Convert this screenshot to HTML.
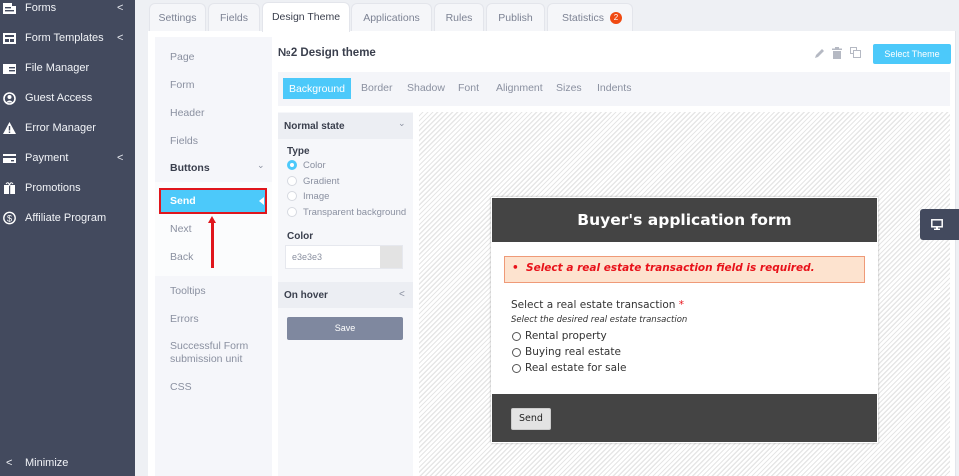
<!DOCTYPE html>
<html><head><meta charset="utf-8">
<style>
*{box-sizing:border-box;margin:0;padding:0}
body{width:959px;height:476px;overflow:hidden;background:#eef0f4;font-family:"Liberation Sans",sans-serif;position:relative;font-size:11px;color:#8a90a0}
.abs{position:absolute}
#side{left:0;top:0;width:135px;height:476px;background:#434a5e}
.si{position:absolute;left:25px;color:#f2f4f8;font-size:11px}
.ic{position:absolute;left:3px;width:13px;height:11px}
.chev{position:absolute;left:117px;color:#e8eaf0;font-size:11px}
.tab{position:absolute;top:3px;height:29px;background:#f5f6f9;border:1px solid #e3e5eb;border-bottom:none;border-radius:6px 6px 0 0;text-align:center;line-height:28px;color:#7d8394;font-size:10.5px}
.tab.act{background:#fff;color:#3a3f4d;top:2px;height:30px}
#panel{left:148px;top:31px;width:808px;height:445px;background:#fff;border-right:1px solid #e3e5eb}
#lm{left:155px;top:37px;width:117px;height:439px;background:#f5f6fa}
.li{position:absolute;left:170px;font-size:10.5px;color:#8a90a0}
.tb{position:absolute;top:83px;font-size:10.5px;color:#8a90a0;line-height:1}
.rad{position:absolute;left:287px;width:10px;height:10px;border:1px solid #d6d9e0;border-radius:50%;background:#fff}
.rl{position:absolute;left:303px;font-size:9.5px;color:#8a90a0}
.fr{position:absolute;left:512px;width:9px;height:9px;border:1px solid #555;border-radius:50%}
.fl{position:absolute;left:525px;font-family:"DejaVu Sans",sans-serif;font-size:10.5px;color:#333}
</style></head><body>
<div id="side" class="abs">
 <svg class="ic" style="top:3px" viewBox="0 0 13 11"><rect x="0" y="0" width="13" height="11" fill="#fff"/><rect x="2" y="4" width="6" height="1.4" fill="#434a5e"/><rect x="2" y="7" width="9" height="1.4" fill="#434a5e"/><rect x="9" y="0" width="4" height="3" fill="#434a5e"/></svg>
 <div class="si" style="top:2px">Forms</div><div class="chev" style="top:2px">&lt;</div>
 <svg class="ic" style="top:33px" viewBox="0 0 13 11"><rect width="13" height="11" fill="#fff"/><rect x="2" y="2" width="9" height="2" fill="#434a5e"/><rect x="2" y="6" width="4" height="3" fill="#434a5e"/><rect x="7" y="6" width="4" height="3" fill="#434a5e"/></svg>
 <div class="si" style="top:32px">Form Templates</div><div class="chev" style="top:32px">&lt;</div>
 <svg class="ic" style="top:63px" viewBox="0 0 13 11"><rect y="1" width="13" height="10" fill="#fff"/><rect x="6" y="4" width="6" height="1.4" fill="#434a5e"/><rect x="6" y="7" width="6" height="1.4" fill="#434a5e"/></svg>
 <div class="si" style="top:62px">File Manager</div>
 <svg class="ic" style="top:92px;height:13px" viewBox="0 0 13 13"><circle cx="6.5" cy="6.5" r="5.5" fill="none" stroke="#fff" stroke-width="1.6"/><circle cx="6.5" cy="5" r="2" fill="#fff"/><path d="M3 10.5q3.5-4 7 0" fill="#fff"/></svg>
 <div class="si" style="top:92px">Guest Access</div>
 <svg class="ic" style="top:122px;height:12px" viewBox="0 0 13 12"><path d="M6.5 0L13 12H0z" fill="#fff"/><rect x="5.8" y="4" width="1.4" height="4.5" fill="#434a5e"/><rect x="5.8" y="9.5" width="1.4" height="1.4" fill="#434a5e"/></svg>
 <div class="si" style="top:122px">Error Manager</div>
 <svg class="ic" style="top:153px" viewBox="0 0 13 11"><rect y="1" width="13" height="9" fill="#fff"/><rect y="3" width="13" height="2" fill="#434a5e"/><rect x="8" y="7" width="3" height="1.4" fill="#434a5e"/></svg>
 <div class="si" style="top:152px">Payment</div><div class="chev" style="top:152px">&lt;</div>
 <svg class="ic" style="top:182px;height:12px" viewBox="0 0 13 12"><rect x="1" y="3" width="11" height="9" fill="#fff"/><rect x="6" y="3" width="1.2" height="9" fill="#434a5e"/><path d="M3 2q2-3 3.5 1q1.5-4 3.5-1" stroke="#fff" fill="none"/></svg>
 <div class="si" style="top:182px">Promotions</div>
 <svg class="ic" style="top:211px;height:14px" viewBox="0 0 13 14"><circle cx="6.5" cy="7" r="5.7" fill="none" stroke="#fff" stroke-width="1.4"/><text x="6.5" y="10.5" font-size="9" fill="#fff" text-anchor="middle" font-family="Liberation Sans">$</text></svg>
 <div class="si" style="top:212px">Affiliate Program</div>
 <div class="abs" style="left:6px;top:457px;color:#f2f4f8;font-size:11px">&lt;</div>
 <div class="si" style="top:457px">Minimize</div>
</div>

<div class="tab" style="left:149px;width:57px">Settings</div>
<div class="tab" style="left:208px;width:52px">Fields</div>
<div class="tab" style="left:351px;width:81px">Applications</div>
<div class="tab" style="left:434px;width:50px">Rules</div>
<div class="tab" style="left:486px;width:59px">Publish</div>
<div class="tab" style="left:547px;width:86px;text-align:left;padding-left:14px">Statistics <span style="display:inline-block;width:12px;height:12px;border-radius:50%;background:#f04a12;color:#fff;font-size:8px;line-height:12px;text-align:center;margin-left:3px;vertical-align:1px">2</span></div>
<div id="panel" class="abs"></div>
<div class="tab act" style="left:262px;width:88px;border-color:#e3e5eb">Design Theme</div>

<div id="lm" class="abs"></div>
<div class="li" style="top:51px">Page</div>
<div class="li" style="top:79px">Form</div>
<div class="li" style="top:107px">Header</div>
<div class="li" style="top:135px">Fields</div>
<div class="li" style="top:162px;color:#3a3f4d;font-weight:bold">Buttons</div>
<div class="abs" style="left:257px;top:160px;color:#8a90a0;font-size:9px">&#8964;</div>
<div class="abs" style="left:155px;top:182px;width:117px;height:94px;background:#fbfcfd"></div>
<div class="abs" style="left:159px;top:188px;width:108px;height:26px;background:#4cc9fa;border:2px solid #e0161c"></div>
<div class="abs" style="left:170px;top:195px;color:#fff;font-weight:bold;font-size:10.5px">Send</div>
<div class="abs" style="left:259px;top:197px;width:0;height:0;border-top:4px solid transparent;border-bottom:4px solid transparent;border-right:5px solid #fff"></div>
<div class="li" style="top:223px">Next</div>
<div class="li" style="top:251px">Back</div>
<div class="abs" style="left:211px;top:222px;width:3px;height:46px;background:#e0161c"></div>
<div class="abs" style="left:208px;top:216px;width:0;height:0;border-left:4.5px solid transparent;border-right:4.5px solid transparent;border-bottom:7px solid #e0161c"></div>
<div class="li" style="top:285px">Tooltips</div>
<div class="li" style="top:313px">Errors</div>
<div class="li" style="top:340px;line-height:13px">Successful Form<br>submission unit</div>
<div class="li" style="top:381px">CSS</div>

<div class="abs" style="left:278px;top:47px;font-weight:bold;font-size:11.5px;color:#3a3f4d">№2 Design theme</div>
<svg class="abs" style="left:814px;top:47px" width="12" height="12" viewBox="0 0 12 12"><path d="M1 11l1-3 6-6 2 2-6 6z" fill="#b5b9c3"/></svg>
<svg class="abs" style="left:832px;top:47px" width="10" height="12" viewBox="0 0 10 12"><rect x="0" y="1.5" width="10" height="1.5" fill="#b5b9c3"/><rect x="3" y="0" width="4" height="1.5" fill="#b5b9c3"/><rect x="1" y="4" width="8" height="8" fill="#b5b9c3"/></svg>
<svg class="abs" style="left:850px;top:47px" width="11" height="11" viewBox="0 0 11 11"><rect x="0.5" y="0.5" width="6" height="6" fill="none" stroke="#b5b9c3"/><rect x="3.5" y="3.5" width="7" height="7" fill="#fff" stroke="#b5b9c3"/></svg>
<div class="abs" style="left:873px;top:44px;width:78px;height:20px;background:#4cc9fa;border-radius:2px;color:#fff;font-size:9px;text-align:center;line-height:20px">Select Theme</div>

<div class="abs" style="left:278px;top:72px;width:672px;height:34px;background:#f4f5f9"></div>
<div class="abs" style="left:283px;top:78px;width:68px;height:21px;background:#4cc9fa;color:#fff;font-size:10.5px;text-align:center;line-height:22px">Background</div>
<div class="tb" style="left:361px">Border</div>
<div class="tb" style="left:407px">Shadow</div>
<div class="tb" style="left:458px">Font</div>
<div class="tb" style="left:496px">Alignment</div>
<div class="tb" style="left:556px">Sizes</div>
<div class="tb" style="left:597px">Indents</div>

<div class="abs" style="left:278px;top:112px;width:135px;height:364px;background:#f6f7fa"></div>
<div class="abs" style="left:278px;top:113px;width:135px;height:26px;background:#eceef3"></div>
<div class="abs" style="left:284px;top:121px;font-weight:bold;color:#3a3f4d;font-size:10px">Normal state</div>
<div class="abs" style="left:398px;top:118px;color:#8a90a0;font-size:9px">&#8964;</div>
<div class="abs" style="left:287px;top:146px;color:#3a3f4d;font-size:10px;font-weight:bold">Type</div>
<div class="rad" style="top:160px;border:3px solid #4cc9fa"></div><div class="rl" style="top:160px">Color</div>
<div class="rad" style="top:176px"></div><div class="rl" style="top:176px">Gradient</div>
<div class="rad" style="top:191px"></div><div class="rl" style="top:191px">Image</div>
<div class="rad" style="top:207px"></div><div class="rl" style="top:207px">Transparent background</div>
<div class="abs" style="left:287px;top:231px;color:#3a3f4d;font-size:10px;font-weight:bold">Color</div>
<div class="abs" style="left:285px;top:245px;width:118px;height:24px;background:#fff;border:1px solid #e6e8ee"></div>
<div class="abs" style="left:292px;top:252px;font-size:9px;color:#8a90a0">e3e3e3</div>
<div class="abs" style="left:380px;top:246px;width:22px;height:22px;background:#e3e3e3"></div>
<div class="abs" style="left:278px;top:282px;width:135px;height:26px;background:#eceef3"></div>
<div class="abs" style="left:284px;top:290px;font-weight:bold;color:#3a3f4d;font-size:10px">On hover</div>
<div class="abs" style="left:399px;top:289px;color:#8a90a0;font-size:10px">&lt;</div>
<div class="abs" style="left:287px;top:317px;width:116px;height:23px;background:#7f889f;border-radius:2px;color:#fff;font-size:9px;text-align:center;line-height:23px">Save</div>

<div class="abs" style="left:419px;top:112px;width:531px;height:364px;background:repeating-linear-gradient(135deg,#fff 0 2.2px,#e6e6e6 2.2px 3.5px)"></div>
<div class="abs" style="left:920px;top:209px;width:39px;height:31px;background:#434a5e;border-radius:3px 0 0 3px"></div>
<svg class="abs" style="left:931px;top:219px" width="12" height="11" viewBox="0 0 12 11"><rect x="0.8" y="0.8" width="10.4" height="7" fill="none" stroke="#fff" stroke-width="1.5"/><rect x="5" y="8" width="2" height="2" fill="#fff"/><rect x="3" y="9.6" width="6" height="1.4" fill="#fff"/></svg>

<div class="abs" style="left:491px;top:197px;width:387px;height:246px;box-shadow:0 0 2px rgba(0,0,0,.3);background:#fff"></div>
<div class="abs" style="left:492px;top:198px;width:385px;height:44px;background:#444;color:#fff;font-family:'DejaVu Sans',sans-serif;font-weight:bold;font-size:15.5px;text-align:center;line-height:44px">Buyer's application form</div>
<div class="abs" style="left:504px;top:256px;width:361px;height:27px;background:#fde3cf;border:1px solid #ef9a78"></div>
<div class="abs" style="left:512px;top:262px;color:#e8121a;font-family:'DejaVu Sans',sans-serif;font-style:italic;font-weight:bold;font-size:10.5px">•&nbsp; Select a real estate transaction field is required.</div>
<div class="abs" style="left:511px;top:299px;font-family:'DejaVu Sans',sans-serif;font-size:10.5px;color:#333">Select a real estate transaction <span style="color:#e8121a">*</span></div>
<div class="abs" style="left:511px;top:315px;font-family:'DejaVu Sans',sans-serif;font-style:italic;font-size:8.5px;color:#333">Select the desired real estate transaction</div>
<div class="fr" style="top:332px"></div><div class="fl" style="top:330px">Rental property</div>
<div class="fr" style="top:348px"></div><div class="fl" style="top:346px">Buying real estate</div>
<div class="fr" style="top:364px"></div><div class="fl" style="top:362px">Real estate for sale</div>
<div class="abs" style="left:492px;top:394px;width:385px;height:48px;background:#444"></div>
<div class="abs" style="left:511px;top:408px;width:40px;height:22px;background:#e3e3e3;border:1px solid #ccc;border-radius:2px;font-family:'DejaVu Sans',sans-serif;font-size:9.5px;color:#222;text-align:center;line-height:20px">Send</div>
</body></html>
